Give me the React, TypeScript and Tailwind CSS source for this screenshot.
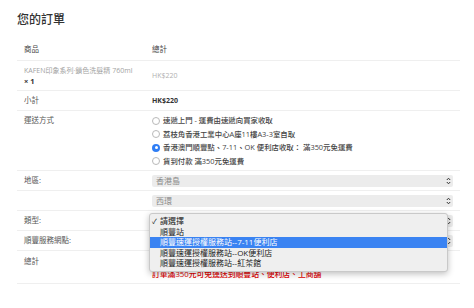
import React from "react";

const Arrows = () => (
  <svg width="5" height="8" viewBox="0 0 5 8" className="shrink-0">
    <path d="M0.8 3 L2.5 1.2 L4.2 3" fill="none" stroke="#333" strokeWidth="1" />
    <path d="M0.8 5 L2.5 6.8 L4.2 5" fill="none" stroke="#333" strokeWidth="1" />
  </svg>
);

const Select = ({ value }: { value?: string }) => (
  <div className="flex h-[12px] w-[301px] items-center justify-between rounded-[2px] bg-[#ececec] pl-[4px] pr-[2px] text-[8px] leading-none text-[#8a8a8a]">
    <span>{value}</span>
    <Arrows />
  </div>
);

const Radio = ({ checked, label }: { checked?: boolean; label: React.ReactNode }) => (
  <div className="flex h-[13.5px] items-center gap-[3px]">
    {checked ? (
      <span className="flex h-[8px] w-[8px] items-center justify-center rounded-full bg-[#2f7ef5]">
        <span className="h-[3px] w-[3px] rounded-full bg-white" />
      </span>
    ) : (
      <span className="h-[8px] w-[8px] rounded-full border border-[#b9b9b9] bg-white" />
    )}
    <span className="whitespace-nowrap text-[7.4px] font-medium leading-none text-[#444]">{label}</span>
  </div>
);

const Row = ({
  label,
  children,
  className = "",
}: {
  label: React.ReactNode;
  children?: React.ReactNode;
  className?: string;
}) => (
  <div className={`flex border-b border-[#efefef] ${className}`}>
    <div className="w-[135px] shrink-0 pl-[7px]">{label}</div>
    <div className="flex-1">{children}</div>
  </div>
);

export default function App() {
  return (
    <div
      className="relative h-[308px] w-[474px] overflow-hidden bg-white text-[#555]"
      style={{ fontFamily: '"Open Sans", "Noto Sans CJK TC", sans-serif' }}
    >
      <div className="pl-[17px] pt-[12px] text-[12px] font-medium leading-[16px] text-[#333]">您的訂單</div>

      <div className="ml-[17px] mt-[12px] w-[443px] text-[7.5px]">
        <Row className="h-[21px] items-center" label={<span className="text-[#444]">商品</span>}>
          <span className="text-[#444]">總計</span>
        </Row>
        <Row
          className="h-[30px] items-center"
          label={
            <div className="flex flex-col leading-[10px]">
              <span className="whitespace-nowrap text-[7px] text-[#a3a3a3]">KAFEN印象系列·鎖色洗髮精 760ml</span>
              <span className="font-bold text-[#333]">× 1</span>
            </div>
          }
        >
          <span className="text-[7px] text-[#b0b0b0]">HK$220</span>
        </Row>
        <Row className="h-[20px] items-center" label="小計">
          <span className="text-[7px] font-bold text-[#333]">HK$220</span>
        </Row>
        <Row className="h-[60px] pt-[3px]" label={<div className="flex h-[13.5px] items-center">運送方式</div>}>
          <Radio label="速遞上門 - 運費由速遞向買家收取" />
          <Radio label="荔枝角香港工業中心A座11樓A3-3室自取" />
          <Radio checked label="香港澳門順豐點、7-11、OK 便利店收取： 滿350元免運費" />
          <Radio label="貨到付款 滿350元免運費" />
        </Row>
        <Row className="h-[20px] items-center" label="地區:">
          <Select value="香港島" />
        </Row>
        <Row className="h-[20px] items-center" label="">
          <Select value="西環" />
        </Row>
        <Row className="h-[20px] items-center" label="類型:">
          <Select />
        </Row>
        <Row className="h-[20px] items-center" label="順豐服務網點:">
          <Select />
        </Row>
        <Row className="h-[33px] pt-[5px]" label="總計">
          <div className="h-[12px]" />
          <div className="mt-[3px] whitespace-nowrap text-[7.8px] font-medium leading-none text-[#e00000]">
            訂單滿350元可免運送到順豐站、便利店、工商舖
          </div>
        </Row>
      </div>

      <div className="absolute left-[149px] top-[213px] w-[299px] rounded-[3px] border border-[#c9c9c9] bg-[#efefef] py-[2px] text-[8px] leading-none text-[#222] shadow-[0_2px_6px_rgba(0,0,0,0.25)]">
        <div className="flex h-[10.5px] items-center">
          <span className="w-[10px] pl-[2px] text-[7px]">✓</span>
          <span>請選擇</span>
        </div>
        <div className="flex h-[10.5px] items-center pl-[10px]">順豐站</div>
        <div className="flex h-[10.5px] items-center bg-[#3a83f2] pl-[10px] text-white">順豐速運授權服務站--7-11便利店</div>
        <div className="flex h-[10.5px] items-center pl-[10px]">順豐速運授權服務站--OK便利店</div>
        <div className="flex h-[10.5px] items-center pl-[10px]">順豐速運授權服務站--紅茶館</div>
      </div>
    </div>
  );
}
